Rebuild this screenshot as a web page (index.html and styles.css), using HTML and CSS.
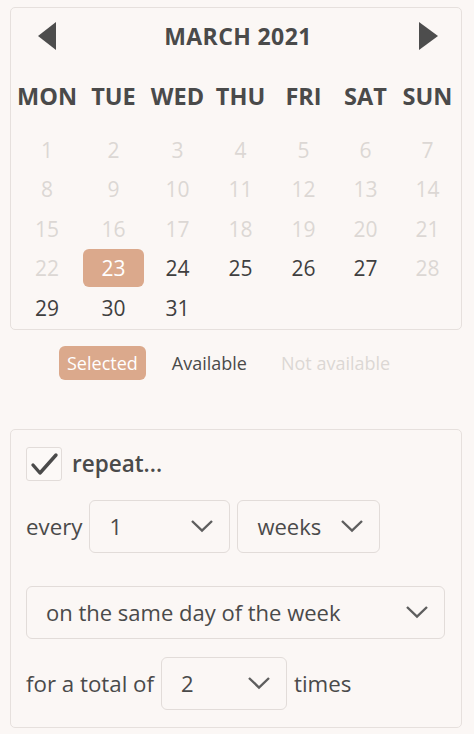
FILE: index.html
```html
<!DOCTYPE html>
<html lang="en">
<head>
<meta charset="utf-8">
<title>Date picker</title>
<link rel="stylesheet" href="styles.css">
</head>
<body>
<div class="page">
  <section class="card calendar">
    <header class="cal-head">
      <button class="nav prev" aria-label="Previous month">
        <svg width="18" height="28" viewBox="0 0 18 28"><polygon points="18,0 18,28 0,14" fill="#4d4d4d"/></svg>
      </button>
      <h1 class="month">MARCH 2021</h1>
      <button class="nav next" aria-label="Next month">
        <svg width="19" height="28" viewBox="0 0 19 28"><polygon points="0,0 0,28 19,14" fill="#4d4d4d"/></svg>
      </button>
    </header>
    <div class="grid">
      <div class="wd">MON</div><div class="wd">TUE</div><div class="wd">WED</div><div class="wd">THU</div><div class="wd">FRI</div><div class="wd">SAT</div><div class="wd">SUN</div>
      <div class="day off">1</div><div class="day off">2</div><div class="day off">3</div><div class="day off">4</div><div class="day off">5</div><div class="day off">6</div><div class="day off">7</div>
      <div class="day off">8</div><div class="day off">9</div><div class="day off">10</div><div class="day off">11</div><div class="day off">12</div><div class="day off">13</div><div class="day off">14</div>
      <div class="day off">15</div><div class="day off">16</div><div class="day off">17</div><div class="day off">18</div><div class="day off">19</div><div class="day off">20</div><div class="day off">21</div>
      <div class="day off">22</div><div class="day sel">23</div><div class="day">24</div><div class="day">25</div><div class="day">26</div><div class="day">27</div><div class="day off">28</div>
      <div class="day">29</div><div class="day">30</div><div class="day">31</div>
    </div>
  </section>

  <div class="legend">
    <span class="chip sel">Selected</span>
    <span class="chip">Available</span>
    <span class="chip off">Not available</span>
  </div>

  <section class="card repeat">
    <label class="check-row">
      <span class="checkbox">
        <svg width="34" height="32" viewBox="0 0 34 32"><polyline points="6,17 13,25 29,7" fill="none" stroke="#4a4a4a" stroke-width="3.4" stroke-linecap="round" stroke-linejoin="round"/></svg>
      </span>
      <span class="check-label">repeat...</span>
    </label>

    <div class="row every">
      <span class="txt">every</span>
      <div class="select w-num"><span>1</span><svg class="chev" width="24" height="14" viewBox="0 0 24 14"><polyline points="2,2 12,11.5 22,2" fill="none" stroke="#5e5e5e" stroke-width="2.4"/></svg></div>
      <div class="select w-unit"><span>weeks</span><svg class="chev" width="24" height="14" viewBox="0 0 24 14"><polyline points="2,2 12,11.5 22,2" fill="none" stroke="#5e5e5e" stroke-width="2.4"/></svg></div>
    </div>

    <div class="row mode">
      <div class="select w-full"><span>on the same day of the week</span><svg class="chev" width="24" height="14" viewBox="0 0 24 14"><polyline points="2,2 12,11.5 22,2" fill="none" stroke="#5e5e5e" stroke-width="2.4"/></svg></div>
    </div>

    <div class="row total">
      <span class="txt">for a total of</span>
      <div class="select w-count"><span>2</span><svg class="chev" width="24" height="14" viewBox="0 0 24 14"><polyline points="2,2 12,11.5 22,2" fill="none" stroke="#5e5e5e" stroke-width="2.4"/></svg></div>
      <span class="txt">times</span>
    </div>
  </section>
</div>
</body>
</html>
```

FILE: styles.css
```css
* { box-sizing: border-box; }

html, body {
  margin: 0;
  padding: 0;
  background: #fbf7f5;
}

body {
  font-family: "Open Sans", "Liberation Sans", sans-serif;
  color: #4a4a4a;
}

.page {
  width: 452px;
  margin: 7px 0 0 10px;
}

.card {
  border: 1px solid #e6e0dd;
  border-radius: 5px;
  background: #fbf7f5;
}

/* calendar */
.calendar {
  padding: 6px 3px 1px;
}

.cal-head {
  height: 44px;
  display: flex;
  align-items: center;
  justify-content: space-between;
  padding: 0 20px 0 23px;
}

.nav {
  border: 0;
  background: none;
  padding: 0;
  width: 19px;
  height: 28px;
  display: flex;
  align-items: center;
  justify-content: center;
}

.month {
  margin: 0;
  font-size: 23px;
  font-weight: 700;
  letter-spacing: 0.4px;
  color: #4a4a4a;
  padding-left: 1px;
}

.grid {
  display: grid;
  grid-template-columns: 66fr 67fr 61fr 65fr 61fr 63fr 61fr;
  grid-template-rows: 54px;
  grid-auto-rows: 39.5px;
  margin-top: 18px;
}

.wd {
  grid-row: 1;
  height: 40px;
  display: flex;
  align-items: center;
  justify-content: center;
  font-size: 23.5px;
  font-weight: 700;
  color: #4a4a4a;
}

.day {
  margin: 0.75px 3px;
  display: flex;
  align-items: center;
  justify-content: center;
  font-size: 21px;
  color: #3f3f3f;
  border-radius: 6px;
}

.day.off { color: #dcd7d4; }

.day.sel {
  background: #dba98c;
  color: #ffffff;
}

/* legend */
.legend {
  display: flex;
  gap: 18px;
  margin: 16px 0 0 49px;
  height: 34px;
}

.chip {
  display: flex;
  align-items: center;
  padding: 0 8px;
  font-size: 18px;
  border-radius: 6px;
  color: #4a4a4a;
}

.chip.sel {
  background: #dba98c;
  color: #fff;
}

.chip.off { color: #dcd7d4; }

/* repeat card */
.repeat {
  margin-top: 49px;
  padding: 17px 16px 17px 15px;
}

.check-row {
  display: flex;
  align-items: center;
  gap: 10px;
}

.checkbox {
  width: 36px;
  height: 34px;
  border: 1px solid #e2dcd9;
  border-radius: 3px;
  background: #fcf9f7;
  display: flex;
  align-items: center;
  justify-content: center;
}

.check-label {
  font-size: 22.5px;
  font-weight: 600;
  color: #4a4a4a;
}

.row {
  display: flex;
  align-items: center;
  gap: 7px;
}

.row.every { margin-top: 19px; }
.row.mode { margin-top: 33px; }
.row.total { margin-top: 18px; }

.txt {
  font-size: 22.3px;
  color: #4a4a4a;
}

.select {
  height: 53px;
  border: 1px solid #e2dcd9;
  border-radius: 6px;
  display: flex;
  align-items: center;
  justify-content: space-between;
  padding: 0 15px 0 19px;
  font-size: 22px;
  color: #4a4a4a;
  background: #fbf7f5;
}

.w-num { width: 141px; }
.w-unit { width: 143px; }
.w-full { width: 420px; }
.w-count { width: 126px; }
```
